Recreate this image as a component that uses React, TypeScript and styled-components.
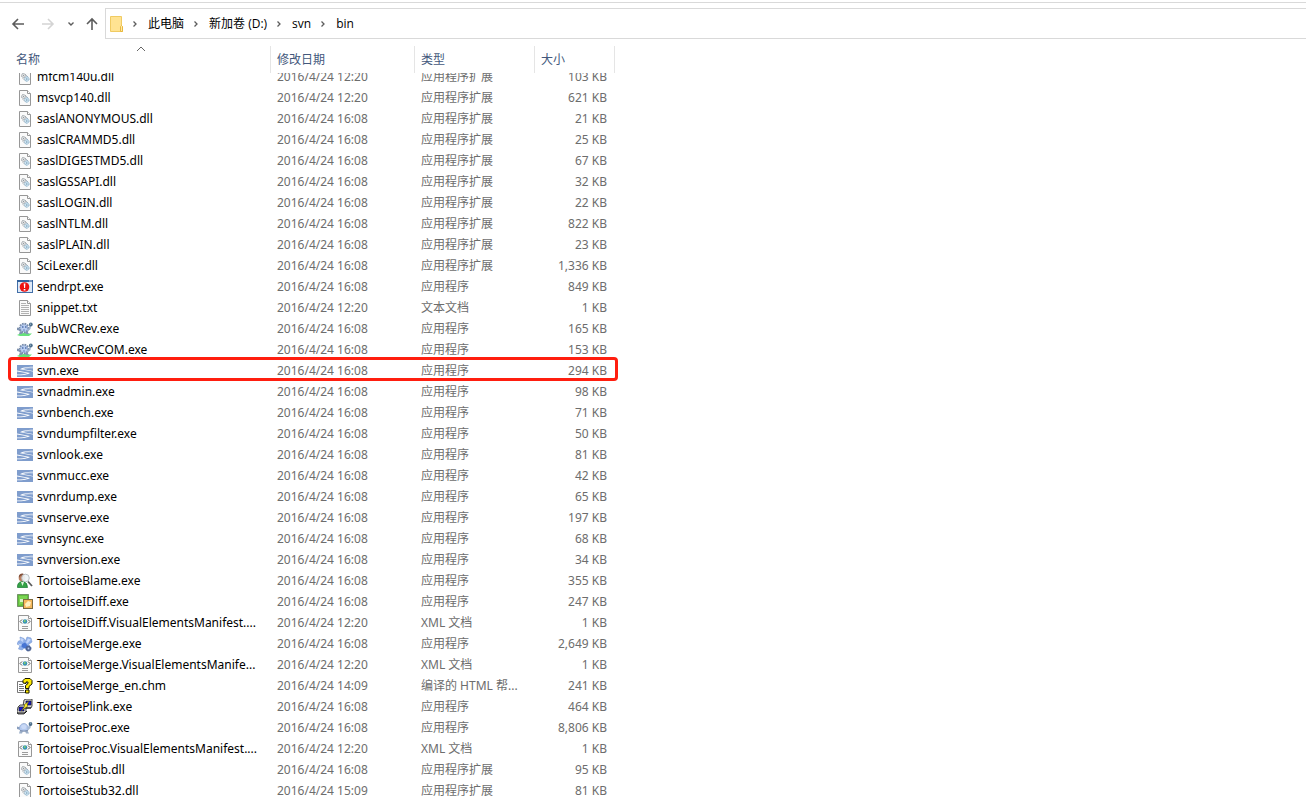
import React from "react";
import styled, { createGlobalStyle } from "styled-components";

const GlobalStyle = createGlobalStyle`
  *, *::before, *::after { box-sizing: border-box; }
  html, body { margin: 0; background: #fff; }
  body { overflow: hidden; }
`;

const Window = styled.main`
  display: flex;
  flex-direction: column;
  height: 100vh;
  overflow: hidden;
  padding-top: 2px;
  background: #fff;
  color: #000;
  font: 12px/20px "Noto Sans", "Noto Sans CJK SC", sans-serif;
`;

const Toolbar = styled.header`
  display: flex;
  flex: none;
  align-items: center;
  height: 42px;
  border-top: 1px solid #d9d9d9;
`;

const NavGroup = styled.nav`
  display: flex;
  align-items: center;
  gap: 6px;
  width: 105px;
  padding-left: 6px;
`;

const NavButton = styled.button<{ $width: number }>`
  display: flex;
  align-items: center;
  justify-content: center;
  width: ${(p) => p.$width}px;
  height: 24px;
  padding: 0;
  border: 0;
  background: none;
  color: #5c5c5c;

  &:disabled {
    color: #d4d4d4;
  }
`;

const AddressBar = styled.div`
  display: flex;
  flex: 1;
  align-items: center;
  height: 31px;
  padding-left: 4px;
  border: 1px solid #d9d9d9;
  border-right: 0;
`;

const Crumbs = styled.ol`
  display: flex;
  align-items: center;
  margin: 0;
  padding: 0;
  list-style: none;
`;

const Crumb = styled.li`
  display: flex;
  align-items: center;
`;

const Separator = styled.span`
  display: flex;
  justify-content: center;
  width: 25px;
`;

const CrumbButton = styled.button`
  padding: 0;
  border: 0;
  background: none;
  color: #000;
  font: 12px/20px "Open Sans", "Noto Sans CJK SC", sans-serif;
`;

const FileTable = styled.table`
  display: flex;
  flex: 1;
  flex-direction: column;
  align-items: flex-start;
  min-height: 0;
  padding: 2px 0 0 11px;
`;

const columns = "260px 144px 120px 80px";

const TableHead = styled.thead`
  display: block;
  flex: none;
`;

const HeadRow = styled.tr`
  display: grid;
  grid-template-columns: ${columns};
  height: 27px;
`;

const HeadCell = styled.th`
  position: relative;
  padding: 4px 0 0 6px;
  border-right: 1px solid #e5e5e5;
  color: #43587c;
  font-weight: 400;
  text-align: left;
  white-space: nowrap;

  &:first-child {
    padding-left: 5px;
  }
`;

const SortMark = styled.svg`
  position: absolute;
  top: 0;
  left: 50%;
  transform: translateX(-50%);
`;

const TableBody = styled.tbody`
  display: block;
  flex: 1;
  min-height: 0;
  overflow: hidden;
  margin-left: -3px;
  padding-left: 3px;
  padding-right: 3px;
`;

const Row = styled.tr<{ $marked: boolean }>`
  display: grid;
  position: relative;
  grid-template-columns: ${columns};
  align-items: center;
  height: 21px;

  &:first-child {
    margin-top: -7px;
  }

  &::after {
    content: "";
    display: ${(p) => (p.$marked ? "block" : "none")};
    position: absolute;
    inset: -3px -3px 0;
    border: 3px solid #ff1e0f;
    border-radius: 4px;
  }
`;

const Cell = styled.td`
  padding: 0 0 0 6px;
  color: #6d6d6d;
  white-space: nowrap;
`;

const NameCell = styled(Cell)`
  display: flex;
  align-items: center;
  gap: 4px;
  color: #000;
`;

const SizeCell = styled(Cell)`
  padding-right: 8px;
  text-align: right;
`;

const IconSvg = styled.svg`
  display: block;
  flex: none;
`;

type Kind =
  | "dll" | "report" | "text" | "subwc" | "svn" | "blame"
  | "idiff" | "xml" | "merge" | "help" | "plink" | "proc";

const Page = () => (
  <>
    <path d="M2.5 .5h8l3 3v12h-11z" fill="#fafafa" stroke="#979797" />
    <path d="M10.5 .5v3h3" fill="#fff" stroke="#979797" />
  </>
);

const Turtle = () => (
  <>
    <path d="M3 10l-1 3.5h3l1-2.500zM8 11l1 2.500h3l-2-4z" fill="#9db0c9" />
    <path d="M0 6.500l3.500 1v2.500L0 9z" fill="#8b9fbd" />
    <path d="M2.500 9.500C2 5.500 4.500 3.500 7 3.500s4.500 2.500 4 6c-2 2-6.500 2-8.500 0z" fill="#b4c9ee" stroke="#8fa6ce" strokeWidth=".7" />
    <path d="M5 5l3-.5 1.500 2-1 2.500H5.500L4 7z" fill="#c9d9f6" />
    <path d="M10.500 8.500l1.500-3.500h2l-.5 3-2.500 2.500z" fill="#a9bbd4" />
    <circle cx="13.500" cy="4" r="1.900" fill="#4d6f8c" />
    <path d="M13 2.500l1 .5-.5 1z" fill="#d9edf7" />
    <path d="M3 10.500q4 1.500 8 0" fill="none" stroke="#7385a2" strokeWidth=".8" />
  </>
);

const drawings: Record<Kind, React.ReactNode> = {
  dll: (
    <>
      <Page />
      <circle cx="6.500" cy="6.500" r="2" fill="#e8e8e8" stroke="#8f979d" strokeDasharray="1 .4" />
      <circle cx="6.500" cy="6.500" r=".7" fill="#8f999f" />
      <path d="M8 5l3 3M5.500 9L8 11.500" stroke="#a3abb1" strokeWidth=".8" />
      <circle cx="9.800" cy="10" r="2.200" fill="#d4e8f4" stroke="#7fa8c4" strokeDasharray="1 .4" />
      <circle cx="9.800" cy="10" r=".8" fill="#7298b0" />
    </>
  ),
  report: (
    <>
      <rect x=".5" y="1.500" width="15" height="12" fill="#dfeaf8" stroke="#426fa8" />
      <path d="M0 1h16v2H0z" fill="#31619d" />
      <path d="M12 1.500h3v1h-3z" fill="#b6cae5" />
      <circle cx="7.500" cy="8" r="4.800" fill="#ed1111" />
      <path d="M6.700 4.500h1.700l-.3 4.500h-1zM6.700 10h1.700v1.500H6.700z" fill="#fff" />
    </>
  ),
  text: (
    <>
      <Page />
      <path d="M4 3.500h5M4 5.500h8M4 7.500h8M4 9.500h8M4 11.500h8M4 13.500h8" stroke="#a0a0a0" strokeWidth=".8" />
    </>
  ),
  subwc: (
    <>
      <path d="M0 14q4-2.500 8-2t7 .5l-3 2.500H3z" fill="#67e07c" />
      <path d="M3 10l-1 3h3l1-2zM8 11l1 2h3l-2-3z" fill="#8096b4" />
      <path d="M0 6.500l3.500 1v2.500L0 9z" fill="#7f93b0" />
      <circle cx="7" cy="7" r="4.400" fill="#adc3ea" stroke="#7b8da8" strokeDasharray="1.600 1" strokeWidth="1.800" />
      <circle cx="7" cy="7" r="2.800" fill="#bccff0" />
      <path d="M5 5h1.500v2H5zM8 5h1.500v2H8zM6 8.500h2v1H6z" fill="#6886bd" />
      <path d="M11 8.500l1.500-3.500H14l-.5 3-2.500 2.500z" fill="#a0b3cd" />
      <circle cx="13.800" cy="3.500" r="1.900" fill="#4d6f8c" />
      <path d="M13 2.500l1 .5-.5 1z" fill="#d9edf7" />
    </>
  ),
  svn: (
    <>
      <path d="M0 2h16v12H0z" fill="#7f9dcd" />
      <path d="M16 3.800C10 4 4.500 4.800 3 6.200L16 8.600V5.400C12 5 8 5.200 6 5.800 9 4.800 12 4.600 16 4.600z" fill="#fff" />
      <path d="M5.500 5.900C9 5 12.500 5 16 5.400v2.500z" fill="#7f9dcd" />
      <path d="M0 12.300c6-.2 11.500-1 13-2.400L0 7.400v1.200l10.500 1.700C8 11.300 4 11.500 0 11.500z" fill="#fff" />
    </>
  ),
  blame: (
    <>
      <path d="M.5 14.500q-.5-5 4-6h2q4 1 4 6z" fill="#35a246" stroke="#16762e" strokeWidth=".7" />
      <path d="M4 9l1.500 4L7 9z" fill="#dff5dd" />
      <circle cx="5" cy="5" r="3.300" fill="#bb8062" />
      <path d="M2 5q-1-4 3-4.500Q7 0 7 2 3 2 2 5z" fill="#814f38" />
      <path d="M11 8.500l4 4.500" stroke="#5b5b5b" strokeWidth="1.800" />
      <circle cx="8.500" cy="5" r="3.800" fill="#eef4f6" fillOpacity=".92" stroke="#b8bfc4" />
    </>
  ),
  idiff: (
    <>
      <rect x=".5" y=".5" width="11" height="12" fill="#61bd3e" stroke="#344d2b" strokeDasharray="1 1" />
      <path d="M2 2h8v5L5 10l-3 1z" fill="#7bd452" />
      <path d="M3 5h4v3H3z" fill="#d6f4c7" />
      <rect x="6.500" y="5.500" width="9" height="9" fill="#f5b75b" stroke="#7c6a3e" />
      <path d="M8 10l3-3 3 1-1 4-4 1z" fill="#fff0c0" />
    </>
  ),
  xml: (
    <>
      <path d="M1.500 .5h10l3 3v12h-13z" fill="#fafafa" stroke="#979797" />
      <path d="M11.500 .5v3h3" fill="#fff" stroke="#979797" />
      <path d="M5 4.500l-2 2 2 2M11 4.500l2 2-2 2" fill="none" stroke="#555" />
      <circle cx="8" cy="6.500" r="2.300" fill="#3a94b4" />
      <path d="M7 5h1.500v2H7z" fill="#7cc76c" />
      <path d="M5 11.500h6M5 13.500h6" stroke="#9b9b9b" />
    </>
  ),
  merge: (
    <>
      <path d="M3 1l4 1.500L8.500 5 10 1l4 1 1 4-3.500 2.500L14 12l-4 3-2-3.500L5 14l-3.500-1L3 9.500 0 8l1.500-3 2-.5z" fill="#8fb0ea" stroke="#7898d2" strokeWidth=".6" />
      <path d="M3.500 2l3 1L6 6 3.500 4.500zM9 6.500L11 2.500l3 1-3.500 4z" fill="#c3d5f9" />
      <path d="M5 8l3-1.500L11 10l-3 2.500L4.500 11z" fill="#4775d3" />
      <path d="M1 7.500l4 1.200-2 1z" fill="#d5e2fa" />
      <circle cx="11.500" cy="12.500" r="2.500" fill="#54699a" stroke="#3b5486" strokeDasharray="1 .5" />
      <circle cx="11.500" cy="12.500" r=".9" fill="#b5c9ec" />
    </>
  ),
  help: (
    <>
      <path d="M.5 3.500h8l3 3v8H.5z" fill="#fff" stroke="#777" />
      <path d="M2 6.500h4M2 8.500h5M2 10.500h5M2 12.500h5" stroke="#777" />
      <path d="M6 5V2.500L8 .5h5l2 2v3.500l-3 2.500v2H8.500V7.500l2.500-2V4H9v1.500z" fill="#ffeb00" stroke="#161600" />
      <path d="M8.500 12h3.500v3H8.500z" fill="#ffeb00" stroke="#161600" />
    </>
  ),
  plink: (
    <>
      <path d="M7 1l2-1h6v7l-1 2H8L6 7z" fill="#d7d7d7" stroke="#222" strokeWidth=".8" />
      <path d="M9 2h5v4H9z" fill="#1717d5" stroke="#111" strokeWidth=".6" />
      <path d="M1 8l2-2h6v6l-2 3H1l-1-2z" fill="#d7d7d7" stroke="#222" strokeWidth=".8" />
      <path d="M2 8h5v4H2z" fill="#1717d5" stroke="#111" strokeWidth=".6" />
      <path d="M0 14h8l2-2M7 9h7" stroke="#111" fill="none" />
      <path d="M12 2L7 6l1 1-4 5 7-5-1-1z" fill="#ffef20" stroke="#484500" strokeWidth=".5" />
    </>
  ),
  proc: <Turtle />,
};

const FileIcon = ({ kind }: { kind: Kind }) => (
  <IconSvg width="16" height="16" viewBox="0 0 16 16" aria-hidden="true">
    {drawings[kind]}
  </IconSvg>
);

const Arrow = ({ direction }: { direction: "left" | "right" | "up" }) => {
  const paths = {
    left: "M13 7H2M7 2L2 7l5 5",
    right: "M1 7h11M7 2l5 5-5 5",
    up: "M7 13V2M2 7l5-5 5 5",
  };
  return (
    <IconSvg width="14" height="14" viewBox="0 0 14 14" aria-hidden="true">
      <path d={paths[direction]} fill="none" stroke="currentColor" strokeWidth="1.600" />
    </IconSvg>
  );
};

const DLL = "应用程序扩展";
const EXE = "应用程序";
const XML = "XML 文档";
const APRIL = "2016/4/24 16:08";
const NOON = "2016/4/24 12:20";

const files: [Kind, string, string, string, string][] = [
  ["dll", "mfcm140u.dll", NOON, DLL, "103"],
  ["dll", "msvcp140.dll", NOON, DLL, "621"],
  ["dll", "saslANONYMOUS.dll", APRIL, DLL, "21"],
  ["dll", "saslCRAMMD5.dll", APRIL, DLL, "25"],
  ["dll", "saslDIGESTMD5.dll", APRIL, DLL, "67"],
  ["dll", "saslGSSAPI.dll", APRIL, DLL, "32"],
  ["dll", "saslLOGIN.dll", APRIL, DLL, "22"],
  ["dll", "saslNTLM.dll", APRIL, DLL, "822"],
  ["dll", "saslPLAIN.dll", APRIL, DLL, "23"],
  ["dll", "SciLexer.dll", APRIL, DLL, "1,336"],
  ["report", "sendrpt.exe", APRIL, EXE, "849"],
  ["text", "snippet.txt", NOON, "文本文档", "1"],
  ["subwc", "SubWCRev.exe", APRIL, EXE, "165"],
  ["subwc", "SubWCRevCOM.exe", APRIL, EXE, "153"],
  ["svn", "svn.exe", APRIL, EXE, "294"],
  ["svn", "svnadmin.exe", APRIL, EXE, "98"],
  ["svn", "svnbench.exe", APRIL, EXE, "71"],
  ["svn", "svndumpfilter.exe", APRIL, EXE, "50"],
  ["svn", "svnlook.exe", APRIL, EXE, "81"],
  ["svn", "svnmucc.exe", APRIL, EXE, "42"],
  ["svn", "svnrdump.exe", APRIL, EXE, "65"],
  ["svn", "svnserve.exe", APRIL, EXE, "197"],
  ["svn", "svnsync.exe", APRIL, EXE, "68"],
  ["svn", "svnversion.exe", APRIL, EXE, "34"],
  ["blame", "TortoiseBlame.exe", APRIL, EXE, "355"],
  ["idiff", "TortoiseIDiff.exe", APRIL, EXE, "247"],
  ["xml", "TortoiseIDiff.VisualElementsManifest....", NOON, XML, "1"],
  ["merge", "TortoiseMerge.exe", APRIL, EXE, "2,649"],
  ["xml", "TortoiseMerge.VisualElementsManife...", NOON, XML, "1"],
  ["help", "TortoiseMerge_en.chm", "2016/4/24 14:09", "编译的 HTML 帮...", "241"],
  ["plink", "TortoisePlink.exe", APRIL, EXE, "464"],
  ["proc", "TortoiseProc.exe", APRIL, EXE, "8,806"],
  ["xml", "TortoiseProc.VisualElementsManifest....", NOON, XML, "1"],
  ["dll", "TortoiseStub.dll", APRIL, DLL, "95"],
  ["dll", "TortoiseStub32.dll", "2016/4/24 15:09", DLL, "81"],
];

export default function App() {
  return (
    <Window>
      <GlobalStyle />
      <Toolbar>
        <NavGroup aria-label="导航">
          <NavButton $width={24} aria-label="后退"><Arrow direction="left" /></NavButton>
          <NavButton $width={24} aria-label="前进" disabled><Arrow direction="right" /></NavButton>
          <NavButton $width={10} aria-label="最近浏览的位置">
            <IconSvg width="8" height="6" viewBox="0 0 8 6" aria-hidden="true">
              <path d="M1.500 1.500L4 4l2.500-2.500" fill="none" stroke="currentColor" strokeWidth="1.400" />
            </IconSvg>
          </NavButton>
          <NavButton $width={20} aria-label="向上"><Arrow direction="up" /></NavButton>
        </NavGroup>
        <AddressBar>
          <IconSvg width="13" height="18" viewBox="0 0 13 18" aria-hidden="true">
            <path d="M.5 1.500h11v9l1 1v5H.5z" fill="#ffe392" stroke="#f0cb62" />
            <path d="M10.500 16.500v-5l1-1 1 1v5z" fill="#ffe9a8" stroke="#e8b83e" />
          </IconSvg>
          <Crumbs>
            {["此电脑", "新加卷 (D:)", "svn", "bin"].map((name) => (
              <Crumb key={name}>
                <Separator>
                  <IconSvg width="8" height="8" viewBox="0 0 8 8" aria-hidden="true">
                    <path d="M1.500 1.500L4 4 1.500 6.500" fill="none" stroke="#5c5c5c" strokeWidth="1.300" />
                  </IconSvg>
                </Separator>
                <CrumbButton>{name}</CrumbButton>
              </Crumb>
            ))}
          </Crumbs>
        </AddressBar>
      </Toolbar>
      <FileTable>
        <TableHead>
          <HeadRow>
            <HeadCell scope="col">
              名称
              <SortMark width="10" height="6" viewBox="0 0 10 6" aria-hidden="true">
                <path d="M1 5l4-4 4 4" fill="none" stroke="#666" />
              </SortMark>
            </HeadCell>
            <HeadCell scope="col">修改日期</HeadCell>
            <HeadCell scope="col">类型</HeadCell>
            <HeadCell scope="col">大小</HeadCell>
          </HeadRow>
        </TableHead>
        <TableBody>
          {files.map(([kind, name, date, type, size]) => (
            <Row key={name} $marked={name === "svn.exe"}>
              <NameCell><FileIcon kind={kind} />{name}</NameCell>
              <Cell>{date}</Cell>
              <Cell>{type}</Cell>
              <SizeCell>{size} KB</SizeCell>
            </Row>
          ))}
        </TableBody>
      </FileTable>
    </Window>
  );
}
